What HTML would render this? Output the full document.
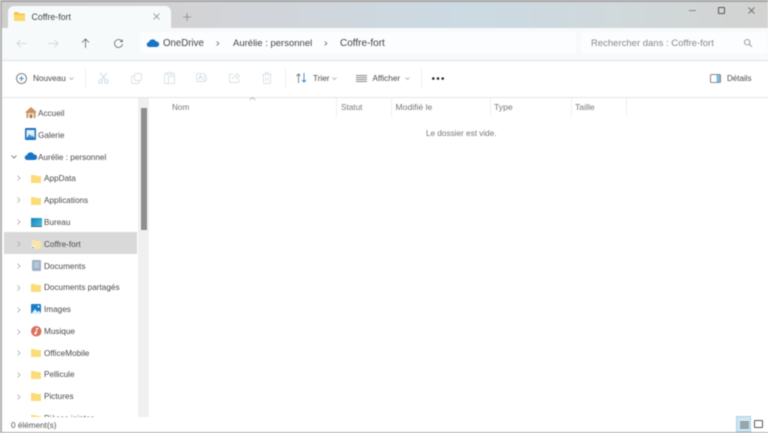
<!DOCTYPE html>
<html lang="fr"><head><meta charset="utf-8"><style>
html,body{margin:0;padding:0;background:#fff}
#w{position:relative;width:768px;height:433px;overflow:hidden;background:#fff;font-family:"Liberation Sans",sans-serif;color:#4a4a4a;filter:blur(.5px)}
.a{position:absolute;white-space:nowrap}
.t{position:absolute;white-space:nowrap;font-size:8.2px;line-height:12px}
svg{position:absolute;overflow:visible}
.c{fill:none;stroke:#aaa;stroke-width:.8}
</style></head><body><div id="w">
<div class="a" style="left:0;top:0;width:768px;height:28px;background:linear-gradient(90deg,#cfcfcf 0,#d3d3d6 25%,#ccdae3 60%,#d0d9dc 80%,#d3d3d1 100%)"></div>
<div class="a" style="left:0;top:0;width:768px;height:1.500px;background:#a4a4a4"></div>
<div class="a" style="left:0;top:0;width:1.500px;height:433px;background:#b0b0b0"></div>
<div class="a" style="left:2px;top:28px;width:766px;height:32px;background:#f7fafb"></div>
<div class="a" style="left:8px;top:6px;width:163px;height:23px;background:#f7fafb;border-radius:6px 6px 0 0"></div>
<svg style="left:14px;top:12px" width="11" height="9"><path d="M0 1q0-1 1-1h3l1.500 1.500H10q1 0 1 1V8q0 1-1 1H1q-1 0-1-1z" fill="#f6c445"/><path d="M0 3h11v5q0 1-1 1H1q-1 0-1-1z" fill="#fbd96e"/></svg>
<div class="t" style="left:31.500px;top:11px;font-size:8.800px;color:#444;font-weight:400">Coffre-fort</div>
<svg style="left:153px;top:13px" width="7" height="7"><path d="M.5.500l6 6M6.500.500l-6 6" stroke="#888" stroke-width=".8"/></svg>
<svg style="left:183px;top:13px" width="8" height="8"><path d="M4 0v8M0 4h8" stroke="#888" stroke-width=".8"/></svg>
<div class="a" style="left:689px;top:10px;width:7px;height:1px;background:#888"></div>
<div class="a" style="left:718px;top:7px;width:5px;height:5px;border:1px solid #555;border-radius:1px"></div>
<svg style="left:748px;top:7px" width="7" height="7"><path d="M.5.500l6 6M6.500.500l-6 6" stroke="#555" stroke-width=".8"/></svg>
<svg style="left:16px;top:39px" width="11" height="9" fill="none" stroke="#ccd2d5" stroke-width=".8"><path d="M11 4.500H1M4.500 1L1 4.500 4.500 8"/></svg>
<svg style="left:48px;top:39px" width="11" height="9" fill="none" stroke="#ccd2d5" stroke-width=".8"><path d="M0 4.500h10M6.500 1L10 4.500 6.500 8"/></svg>
<svg style="left:81px;top:38px" width="9" height="10" fill="none" stroke="#666" stroke-width=".8"><path d="M4.500 10V1M1 4.500L4.500 1 8 4.500"/></svg>
<svg style="left:114px;top:39px" width="9" height="9" fill="none" stroke="#666" stroke-width=".8"><path d="M8 2.500A4 4 0 1 0 8.500 5M8.300.5V2.700H6"/></svg>
<div class="a" style="left:140px;top:32px;width:436px;height:22px;background:#fbfdfe;border-radius:3px"></div>
<svg style="left:147px;top:39px" width="12" height="8"><path d="M2.500 8A2.500 2.500 0 0 1 2 3 3.800 3.800 0 0 1 9 2.500 2.800 2.800 0 0 1 10 8z" fill="#1b73c4"/></svg>
<div class="t" style="left:163px;top:38px;font-size:9.700px;color:#444">OneDrive</div>
<svg style="left:216px;top:41px" width="4" height="5"><path d="M.5.500L3 2.500 .5 4.500" fill="none" stroke="#666" stroke-width=".8"/></svg>
<div class="t" style="left:233px;top:38px;font-size:9.500px;color:#444">Aurélie : personnel</div>
<svg style="left:324px;top:41px" width="4" height="5"><path d="M.5.500L3 2.500 .5 4.500" fill="none" stroke="#666" stroke-width=".8"/></svg>
<div class="t" style="left:340px;top:38px;font-size:10px;color:#444">Coffre-fort</div>
<div class="a" style="left:581px;top:32px;width:186px;height:22px;background:#fbfdfe;border-radius:3px"></div>
<div class="t" style="left:591px;top:38px;font-size:9.500px;color:#888">Rechercher dans : Coffre-fort</div>
<svg style="left:744px;top:39px" width="8" height="8" fill="none" stroke="#888" stroke-width=".8"><circle cx="3.200" cy="3.200" r="2.700"/><path d="M5.200 5.200L8 8"/></svg>
<div class="a" style="left:2px;top:59.500px;width:766px;height:1px;background:#dfe3e5"></div>
<svg style="left:16px;top:73px" width="11" height="11" fill="none" stroke="#666" stroke-width=".8"><circle cx="5.500" cy="5.500" r="5"/><path d="M5.500 3v5M3 5.500h5" stroke="#2272b8"/></svg>
<div class="t" style="left:33px;top:73px">Nouveau</div>
<svg style="left:69px;top:77px" width="5" height="3" class="c"><path d="M.5.500L2.500 2.500 4.500.500"/></svg>
<div class="a" style="left:85px;top:69px;width:1px;height:18px;background:#f0f0f0"></div>
<svg style="left:98px;top:72px" width="11" height="12" fill="none" stroke="#c5d6e4" stroke-width=".9"><circle cx="2.500" cy="9.500" r="1.800"/><circle cx="8.500" cy="9.500" r="1.800"/><path d="M3.500 8L9 .5M7.500 8L2 .5"/></svg>
<svg style="left:131px;top:73px" width="11" height="11" fill="none" stroke="#d8e1e8" stroke-width=".9"><rect x="3.500" y=".5" width="7" height="7" rx="1.500"/><path d="M3 3H1.500q-1 0-1 1v5.500q0 1 1 1H7q1 0 1-1V8"/></svg>
<svg style="left:164px;top:72px" width="11" height="12" fill="none" stroke="#d8e1e8" stroke-width=".9"><path d="M3 1.500H1.500q-1 0-1 1V11q0 .5 1 .5H4M8 1.500h1.500q1 0 1 1V4"/><rect x="3" y=".5" width="5" height="2"/><rect x="4.500" y="4.500" width="6" height="7"/></svg>
<svg style="left:196px;top:72px" width="12" height="12" fill="none" stroke="#d8e1e8" stroke-width=".9"><rect x=".5" y="1.500" width="8" height="8" rx="1"/><path d="M9 2.500a4.500 4.500 0 0 1 0 7"/><path d="M2.500 7.500L4.500 3.500 6.500 7.500" stroke="#c5d6e4"/></svg>
<svg style="left:229px;top:72px" width="11" height="11" fill="none" stroke="#d8e1e8" stroke-width=".9"><path d="M4 2H1.500q-1 0-1 1v6.500q0 1 1 1H9q1 0 1-1V7M3.500 7.500Q4 4 7.500 3.500V1.500L10.500 4 7.500 6.500V5"/></svg>
<svg style="left:262px;top:72px" width="10" height="12" fill="none" stroke="#d8e1e8" stroke-width=".9"><path d="M0 2.500h10M3.500 2.500V.5h3v2M1.500 2.500V11q0 .5.500.5h6q.5 0 .5-.5V2.500M4 5.500v3.500M6 5.500v3.500"/></svg>
<div class="a" style="left:285px;top:69px;width:1px;height:18px;background:#f0f0f0"></div>
<svg style="left:296px;top:73px" width="11" height="10" fill="none" stroke="#666" stroke-width=".8"><path d="M2.500 10V1M.5 3L2.500 1l2 2"/><path d="M8 0v9M6 7l2 2 2-2" stroke="#2272b8"/></svg>
<div class="t" style="left:313px;top:73px">Trier</div>
<svg style="left:332px;top:77px" width="5" height="3" class="c"><path d="M.5.500L2.500 2.500 4.500.500"/></svg>
<svg style="left:356px;top:75px" width="11" height="7" stroke="#666" stroke-width=".8"><path d="M0 .5h11M0 2.500h11M0 4.500h11M0 6.500h11"/></svg>
<div class="t" style="left:372.500px;top:73px">Afficher</div>
<svg style="left:405px;top:77px" width="5" height="3" class="c"><path d="M.5.500L2.500 2.500 4.500.500"/></svg>
<div class="a" style="left:421px;top:69px;width:1px;height:18px;background:#f0f0f0"></div>
<svg style="left:432px;top:77px" width="12" height="3" fill="#222"><circle cx="1.300" cy="1.500" r="1.300"/><circle cx="6" cy="1.500" r="1.300"/><circle cx="10.700" cy="1.500" r="1.300"/></svg>
<svg style="left:710px;top:74px" width="11" height="9"><rect x=".5" y=".5" width="10" height="8" rx="1" fill="none" stroke="#6a6a6a" stroke-width=".8"/><rect x="6.500" y="1" width="3.500" height="7" fill="#7dbde6"/></svg>
<div class="t" style="left:727px;top:73px;font-size:8px">Détails</div>
<div class="a" style="left:2px;top:96.500px;width:766px;height:1.500px;background:#e4e4e4"></div>
<div class="a" style="left:138px;top:98px;width:11px;height:319px;background:#f0f0f0"></div>
<div class="a" style="left:140.500px;top:108px;width:6px;height:122px;background:#8e8e8e"></div>
<div class="a" style="left:4px;top:232px;width:133px;height:22px;background:#d9d9d9"></div>
<svg style="left:25px;top:107px" width="12" height="11"><path d="M6 0L0 5.500h1.500V11h9V5.500H12z" fill="#c98f60"/><path d="M3 6h6v5H3z" fill="#f3dcc0"/><path d="M5 7.500h2V11H5z" fill="#8e6a50"/></svg>
<div class="t" style="left:38px;top:108px">Accueil</div>
<svg style="left:25px;top:128px" width="11" height="12"><rect width="11" height="12" rx="1" fill="#1f6fc0"/><rect x="1.500" y="2" width="8" height="8" fill="#e6f2fb"/><path d="M1.500 10l3-4 2 2.200 1-1 2 2.800z" fill="#3d93d8"/></svg>
<div class="t" style="left:38px;top:130px">Galerie</div>
<svg style="left:11px;top:155px" width="6" height="4" fill="none" stroke="#666" stroke-width=".8"><path d="M.5.500L3 3 5.500.500"/></svg>
<svg style="left:25px;top:152px" width="12" height="8"><path d="M2.500 8A2.500 2.500 0 0 1 2 3 3.800 3.800 0 0 1 9 2.500 2.800 2.800 0 0 1 10 8z" fill="#1b73c4"/></svg>
<div class="t" style="left:38px;top:152px">Aurélie : personnel</div>

<svg style="left:17px;top:175px" width="4" height="6" class="c"><path d="M.5.500L3 3 .5 5.500"/></svg>
<svg style="left:31px;top:174px" width="10" height="9"><path d="M0 1h4l1 1h5v7H0z" fill="#fcdc78"/></svg>
<div class="t" style="left:44px;top:173px">AppData</div>

<svg style="left:17px;top:197px" width="4" height="6" class="c"><path d="M.5.500L3 3 .5 5.500"/></svg>
<svg style="left:31px;top:196px" width="10" height="9"><path d="M0 1h4l1 1h5v7H0z" fill="#fcdc78"/></svg>
<div class="t" style="left:44px;top:195px">Applications</div>

<svg style="left:17px;top:219px" width="4" height="6" class="c"><path d="M.5.500L3 3 .5 5.500"/></svg>
<div class="a" style="left:31px;top:218px;width:10.500px;height:8px;background:linear-gradient(135deg,#1d7fb8,#45c0e0);border-bottom:1px solid #567"></div>
<div class="t" style="left:44px;top:217px">Bureau</div>

<svg style="left:17px;top:241px" width="4" height="6" class="c"><path d="M.5.500L3 3 .5 5.500"/></svg>
<svg style="left:31px;top:239px" width="10" height="10"><path d="M1 1h3l1 1h5v8H1z" fill="#f9e6a8"/><circle cx="2" cy="8" r="1.500" fill="#fff"/><circle cx="2" cy="8.500" r=".8" fill="#3a80c0"/></svg>
<div class="t" style="left:44px;top:239px">Coffre-fort</div>

<svg style="left:17px;top:263px" width="4" height="6" class="c"><path d="M.5.500L3 3 .5 5.500"/></svg>
<svg style="left:32px;top:260px" width="9" height="11"><rect width="9" height="11" rx="1" fill="#9db1c8"/><path d="M2 3h5M2 5h5M2 7h5" stroke="#e4ebf2" stroke-width=".8"/></svg>
<div class="t" style="left:44px;top:261px">Documents</div>

<svg style="left:17px;top:285px" width="4" height="6" class="c"><path d="M.5.500L3 3 .5 5.500"/></svg>
<svg style="left:31px;top:283px" width="10" height="9"><path d="M0 1h4l1 1h5v7H0z" fill="#fcdc78"/></svg>
<div class="t" style="left:44px;top:282px">Documents partagés</div>

<svg style="left:17px;top:307px" width="4" height="6" class="c"><path d="M.5.500L3 3 .5 5.500"/></svg>
<svg style="left:31px;top:304px" width="10" height="10"><rect width="10" height="10" rx="1" fill="#1a7cc8"/><path d="M0 10l4-5 2.500 3L8 6.500 10 9v1z" fill="#d8eefa"/><circle cx="7.500" cy="2.500" r="1" fill="#fff"/></svg>
<div class="t" style="left:44px;top:304px">Images</div>

<svg style="left:17px;top:329px" width="4" height="6" class="c"><path d="M.5.500L3 3 .5 5.500"/></svg>
<svg style="left:31px;top:326px" width="10.500" height="10.500"><circle cx="5.250" cy="5.250" r="5.250" fill="#d9705c"/><path d="M5.500 2.200V7M5.500 2.200L7.500 3" stroke="#fff" fill="none"/><circle cx="4.400" cy="7.300" r="1.200" fill="#fff"/></svg>
<div class="t" style="left:44px;top:326px">Musique</div>

<svg style="left:17px;top:350px" width="4" height="6" class="c"><path d="M.5.500L3 3 .5 5.500"/></svg>
<svg style="left:31px;top:348px" width="10" height="9"><path d="M0 1h4l1 1h5v7H0z" fill="#fcdc78"/></svg>
<div class="t" style="left:44px;top:348px">OfficeMobile</div>

<svg style="left:17px;top:372px" width="4" height="6" class="c"><path d="M.5.500L3 3 .5 5.500"/></svg>
<svg style="left:31px;top:370px" width="10" height="9"><path d="M0 1h4l1 1h5v7H0z" fill="#fcdc78"/></svg>
<div class="t" style="left:44px;top:369px">Pellicule</div>

<svg style="left:17px;top:394px" width="4" height="6" class="c"><path d="M.5.500L3 3 .5 5.500"/></svg>
<svg style="left:31px;top:392px" width="10" height="9"><path d="M0 1h4l1 1h5v7H0z" fill="#fcdc78"/></svg>
<div class="t" style="left:44px;top:391px">Pictures</div>

<div class="a" style="left:4px;top:410px;width:134px;height:7px;overflow:hidden"><svg style="left:27px;top:4px" width="10" height="9"><path d="M0 1h4l1 1h5v7H0z" fill="#fcdc78"/></svg><div class="t" style="left:40px;top:3px">Pièces jointes</div></div>

<svg style="left:249px;top:97px" width="7" height="4" class="c"><path d="M.5 3L3.500.5 6.500 3"/></svg>
<div class="t" style="left:172px;top:102px;color:#777">Nom</div>
<div class="a" style="left:336px;top:98px;width:1px;height:19px;background:#f0f0f0"></div>
<div class="t" style="left:341px;top:102px;color:#777">Statut</div>
<div class="a" style="left:391px;top:98px;width:1px;height:19px;background:#f0f0f0"></div>
<div class="t" style="left:395.500px;top:101px;color:#777;font-size:8.600px">Modifié le</div>
<div class="a" style="left:490px;top:98px;width:1px;height:19px;background:#f0f0f0"></div>
<div class="t" style="left:494px;top:101px;color:#777;font-size:8.600px">Type</div>
<div class="a" style="left:571px;top:98px;width:1px;height:19px;background:#f0f0f0"></div>
<div class="t" style="left:575px;top:101px;color:#777;font-size:8.600px">Taille</div>
<div class="a" style="left:626px;top:98px;width:1px;height:19px;background:#f0f0f0"></div>
<div class="t" style="left:426px;top:128px;color:#777">Le dossier est vide.</div>

<div class="t" style="left:11px;top:420px;color:#555">0 élément(s)</div>
<div class="a" style="left:736px;top:416px;width:15px;height:16px;background:#cfe6f3;border:.5px solid #a8d2e8;box-sizing:border-box"></div>
<svg style="left:740px;top:421px" width="9" height="8" stroke="#666" stroke-width="1"><path d="M0 1h9M0 3h9M0 5h9M0 7h9"/></svg>
<div class="a" style="left:754px;top:420px;width:7px;height:6px;border:1.200px solid #555;border-radius:1px"></div>
<div class="a" style="left:0;top:431.500px;width:768px;height:1.500px;background:#a9a9a9"></div>
</div></body></html>
